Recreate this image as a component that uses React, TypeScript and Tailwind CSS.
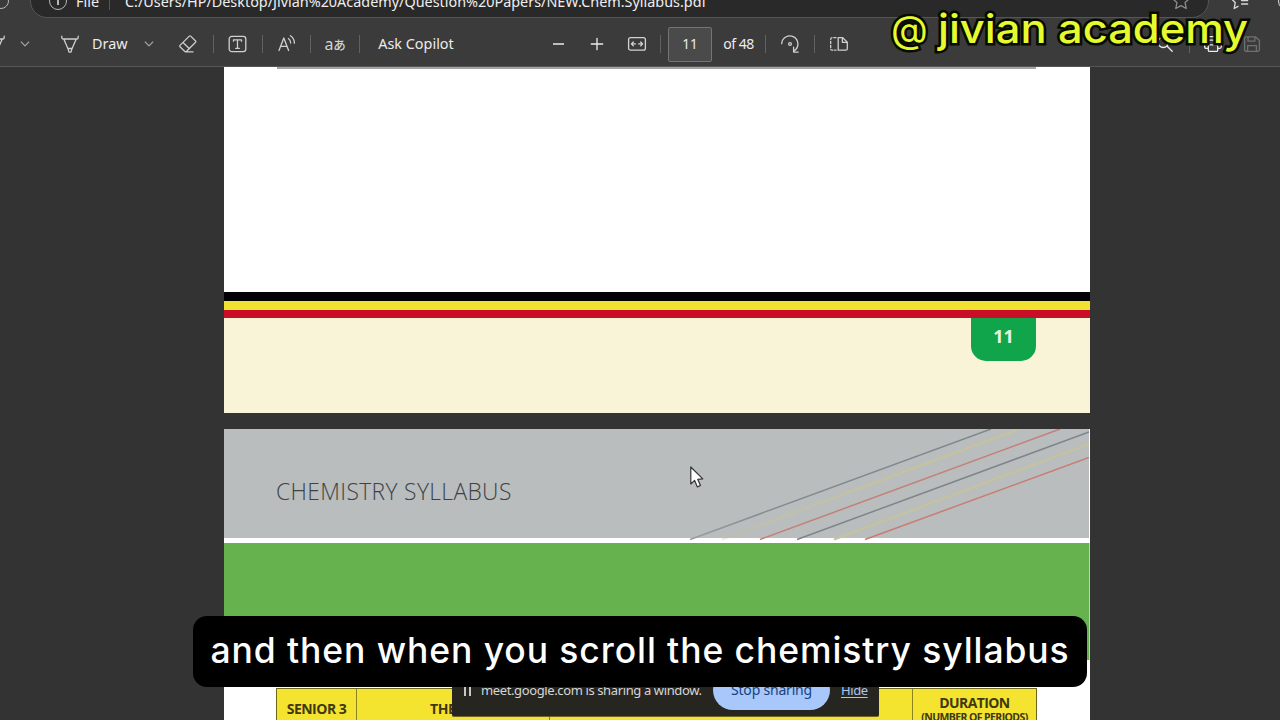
import type { ReactNode } from "react";

const svgProps = {
  fill: "none",
  stroke: "currentColor",
  strokeLinecap: "round" as const,
  strokeLinejoin: "round" as const,
};

function Cell({ className, children }: { className: string; children?: ReactNode }) {
  return <div className={`flex h-full shrink-0 items-center justify-center ${className}`}>{children}</div>;
}

function Separator() {
  return <div className="h-[18px] w-px shrink-0 bg-[#616161]" />;
}

function Chevron() {
  return (
    <svg {...svgProps} width="10" height="10" viewBox="0 0 10 10" strokeWidth="1.1" className="text-[#a5a5a5]">
      <path d="M1.2 3 L5 6.8 L8.8 3" />
    </svg>
  );
}

function PenIcon() {
  return (
    <svg {...svgProps} width="20" height="20" viewBox="0 0 20 20" strokeWidth="1.3" className="shrink-0 text-[#cfcfcf]">
      <path d="M1.8 2.2v1.2c0 .9.6 1.6 1.6 1.6h13.2c1 0 1.6-.7 1.6-1.6V2.2M3.9 5.2l4.4 10.3M16.1 5.2l-4.4 10.3M8 14.5h4l-1 3.6H9z" />
    </svg>
  );
}

function EraserIcon() {
  return (
    <svg {...svgProps} width="20" height="20" viewBox="0 0 20 20" strokeWidth="1.25">
      <path d="M2 11.4 L11.3 2.1 Q12 1.5 12.7 2.1 L17.6 7 Q18.2 7.6 17.6 8.3 L8.6 17.2 Q7.6 18 6.6 17.2 L2 12.8 Q1.4 12.1 2 11.4zM5 8.5l6.4 6.3M7.6 17.9H15" />
    </svg>
  );
}

function TextBoxIcon() {
  return (
    <svg {...svgProps} width="20" height="20" viewBox="0 0 20 20" strokeWidth="1.3">
      <rect x="1.2" y="2.4" width="16.6" height="15.2" rx="2.6" />
      <path d="M5.5 7.2V5.8h8v1.4M9.5 5.8v8.6M7.7 14.4h3.6" />
    </svg>
  );
}

function ReadAloudIcon() {
  return (
    <svg {...svgProps} width="20" height="20" viewBox="0 0 20 20" strokeWidth="1.3">
      <path d="M2 16.5 L6.8 4 L11.6 16.5M3.6 12.3h6.4M11.4 4.5c1.5 1 2.3 2.6 2.3 4.6M13.4 1.7c2.6 1.7 4 4.3 4 7.5" />
    </svg>
  );
}

function FitWidthIcon() {
  return (
    <svg {...svgProps} width="20" height="20" viewBox="0 0 20 20" strokeWidth="1.3">
      <rect x="1.6" y="3.6" width="16.8" height="12.6" rx="2" />
      <path d="M4.4 9.9h4M11.6 9.9h4M6.3 8L4.4 9.9l1.9 1.9M13.7 8l1.9 1.9-1.9 1.9" />
    </svg>
  );
}

function RotateIcon() {
  return (
    <svg {...svgProps} width="20" height="20" viewBox="0 0 20 20" strokeWidth="1.3">
      <path d="M1.7 9.7A8.1 8.1 0 1 1 14.5 16.6M13.6 13.2v4.9h4.6" />
      <circle cx="10" cy="10" r="1.4" />
    </svg>
  );
}

function PageViewIcon() {
  return (
    <svg {...svgProps} width="20" height="20" viewBox="0 0 20 20" strokeWidth="1.3">
      <path d="M9.2 3.7h4.5l4.6 4.4v6.7q0 1.4-1.4 1.4H9.2zM13.4 3.9v4.5h4.7" />
      <path d="M7 3.7H3.2q-1.5 0-1.5 1.5v9.6q0 1.4 1.5 1.4H7" strokeDasharray="2.2 1.8" />
    </svg>
  );
}

function SearchIcon() {
  return (
    <svg {...svgProps} width="18" height="18" viewBox="0 0 18 18" strokeWidth="1.3">
      <circle cx="7.3" cy="7.3" r="5.2" />
      <path d="M11.2 11.2l5 5" />
    </svg>
  );
}

function PrintIcon() {
  return (
    <svg {...svgProps} width="20" height="20" viewBox="0 0 20 20" strokeWidth="1.3">
      <path d="M5.3 6V3.6q0-1 1-1h7.4q1 0 1 1V6M5.3 14.3H3.2q-1.5 0-1.5-1.5V8.2q0-2 2-2h12.6q2 0 2 2v4.6q0 1.5-1.5 1.5h-2.1" />
      <rect x="5.3" y="10.8" width="9.4" height="6.6" rx="1.2" />
    </svg>
  );
}

function SaveIcon() {
  return (
    <svg {...svgProps} width="18" height="18" viewBox="0 0 18 18" strokeWidth="1.3" className="text-[#707070]">
      <path d="M3.2 1.8h9.2l4 3.6v9.2q0 1.7-1.6 1.7H3.2q-1.6 0-1.6-1.7V3.4q0-1.6 1.6-1.6zM5 2v4.2h6.8V2M4.6 16v-5.4h8.8V16" />
    </svg>
  );
}

function StarIcon() {
  return (
    <svg {...svgProps} width="20" height="20" viewBox="0 0 20 20" strokeWidth="1.3">
      <path d="M10 1.5l2.5 5.3 5.9.8-4.3 4 1.1 5.9L10 14.6l-5.2 2.9 1.1-5.9-4.3-4 5.9-.8z" />
    </svg>
  );
}

function FavoritesIcon() {
  return (
    <svg {...svgProps} width="20" height="20" viewBox="0 0 20 20" strokeWidth="1.4">
      <path d="M11.6 6.8L9 1.5 6.5 6.8l-5.2.8 3.9 4-1 5.9L8 15.3M11.6 9.6h6M11.6 13h6" />
    </svg>
  );
}

function AddressRow() {
  return (
    <div className="flex h-[18px] shrink-0 items-end overflow-hidden text-[#d8d8d8]">
      <div className="flex h-[34px] w-[30px] shrink-0 items-center">
        <div className="-ml-[7px] h-4 w-4 rounded-full border-[1.5px] border-[#b5b5b5]" />
      </div>
      <div className="flex h-[34px] w-[1179px] shrink-0 items-center rounded-full border border-[#565656] bg-[#292929]">
        <div className="ml-[18px] flex h-[18px] w-[18px] shrink-0 items-center justify-center rounded-full border-[1.5px] border-[#b5b5b5]">
          <div className="h-2 w-[1.5px] bg-[#b5b5b5]" />
        </div>
        <span className="ml-[9px] w-[24px] shrink-0 pt-px text-[14.4px] leading-5 text-[#efefef]">File</span>
        <div className="ml-[9px] h-[18px] w-px bg-[#555]" />
        <span className="ml-[15px] w-[590px] shrink-0 whitespace-nowrap pt-px text-[14.4px] leading-5 text-[#efefef]">
          C:/Users/HP/Desktop/Jivian%20Academy/Question%20Papers/NEW.Chem.Syllabus.pdf
        </span>
        <div className="ml-auto mr-[17px] text-[#8c8c8c]">
          <StarIcon />
        </div>
      </div>
      <div className="flex h-[34px] grow items-center pl-[21px]">
        <FavoritesIcon />
        <div className="ml-[28px] h-5 w-5 shrink-0 rounded-full border-[1.5px] border-[#dedede]" />
      </div>
    </div>
  );
}

function Toolbar() {
  return (
    <div className="flex h-[49px] shrink-0 items-center border-b border-[#565656] pt-[4px] text-[14.4px] text-[#ececec]">
      <Cell className="w-[12px] justify-end overflow-hidden pr-[6px]">
        <PenIcon />
      </Cell>
      <Cell className="w-[26px]"><Chevron /></Cell>
      <Cell className="w-[91px] pl-[22px]">
        <PenIcon />
        <span className="ml-[12px] mr-auto">Draw</span>
      </Cell>
      <Cell className="w-[10px]" />
      <Cell className="w-[20px]"><Chevron /></Cell>
      <Cell className="w-[54px] pl-[4px] text-[#cfcfcf]"><EraserIcon /></Cell>
      <Separator />
      <Cell className="w-[48px] text-[#cfcfcf]"><TextBoxIcon /></Cell>
      <Separator />
      <Cell className="w-[47px] text-[#cfcfcf]"><ReadAloudIcon /></Cell>
      <Separator />
      <Cell className="w-[48px] text-[#d2d2d2]">
        <span className="font-['Noto_Sans','Noto_Sans_CJK_JP',sans-serif] text-[16px] tracking-[-0.2px]">
          a<span className="text-[12.5px] font-medium">あ</span>
        </span>
      </Cell>
      <Separator />
      <Cell className="w-[112px]"><span className="whitespace-nowrap">Ask Copilot</span></Cell>
      <Cell className="ml-[67px] w-[38px]"><div className="h-[1.5px] w-[11px] bg-[#bdbdbd]" /></Cell>
      <Cell className="w-[38px] pl-[2px]">
        <svg {...svgProps} width="14" height="14" viewBox="0 0 14 14" strokeWidth="1.3"><path d="M1.3 7h11.4M7 1.3v11.4" /></svg>
      </Cell>
      <Cell className="w-[44px] text-[#d2d2d2]"><FitWidthIcon /></Cell>
      <Cell className="w-px" />
      <Separator />
      <div className="ml-[7px] flex h-[35px] w-[44px] shrink-0 items-center justify-center rounded-[2px] border border-[#747474] bg-[#4a4a4a] pt-px text-[13.5px]">11</div>
      <Cell className="w-[53px] pb-px text-[14px] tracking-[-0.5px]">of 48</Cell>
      <Separator />
      <Cell className="w-[48px] text-[#cfcfcf]"><RotateIcon /></Cell>
      <Separator />
      <Cell className="w-[47px] text-[#cfcfcf]"><PageViewIcon /></Cell>
      <Cell className="ml-auto w-[49px]"><SearchIcon /></Cell>
      <Separator />
      <Cell className="w-[46px]"><PrintIcon /></Cell>
      <Cell className="w-[32px]"><SaveIcon /></Cell>
      <Cell className="w-[12px]" />
    </div>
  );
}

function HeaderLines() {
  return (
    <svg className="block shrink-0" width="405" height="112" viewBox="0 0 405 112" fill="none" strokeWidth="1.5">
      <defs>
        <linearGradient id="fade" x1="0" x2="405" y1="0" y2="0" gradientUnits="userSpaceOnUse">
          <stop offset="0" stopColor="#9b9ea1" />
          <stop offset="0.2" stopColor="#858c8f" />
          <stop offset="1" stopColor="#7d858b" />
        </linearGradient>
        <linearGradient id="gold" x1="38" x2="200" y1="0" y2="0" gradientUnits="userSpaceOnUse">
          <stop offset="0" stopColor="#c5c29f" stopOpacity="0.3" />
          <stop offset="1" stopColor="#c5c29f" />
        </linearGradient>
      </defs>
      <path d="M6 110.5L307 0" stroke="url(#fade)" />
      <path d="M38 110.5L335 0" stroke="url(#gold)" strokeWidth="2.4" />
      <path d="M76 110.5L376 0" stroke="#c47f78" />
      <path d="M113 110.5L405 3" stroke="#7d858b" />
      <path d="M150 110.5L405 15" stroke="#c5c29f" strokeWidth="2.4" />
      <path d="M181 110.5L405 28.5" stroke="#c97c74" />
    </svg>
  );
}

function FirstPage() {
  return (
    <section className="flex h-[346px] w-[866px] shrink-0 flex-col bg-white">
      <div className="mx-[53px] h-[2px] w-[759px] bg-[#a3a3a3]" />
      <div className="h-[223px]" />
      <div className="h-[9px] bg-[#020106]" />
      <div className="h-[9px] bg-[#f1e131]" />
      <div className="h-[8px] bg-[#c90e28]" />
      <div className="flex grow justify-end bg-[#f9f3d7] pr-[54px]">
        <div className="flex h-[43px] w-[65px] justify-center rounded-b-[15px] bg-[#10a54b] pt-[6px] font-['Open_Sans',sans-serif] text-[18px] font-bold leading-[25px] text-[#e4f6e3]">11</div>
      </div>
    </section>
  );
}

function SecondPage() {
  return (
    <section className="flex h-[291px] w-[866px] shrink-0 flex-col bg-white">
      <div className="flex h-[109px] w-[865px] justify-between bg-[#b9bdbe]">
        <h1 className="ml-[52px] mt-[45px] whitespace-nowrap font-['Open_Sans',sans-serif] text-[24.5px] font-light leading-[34px] tracking-[0.4px] text-[#3d4244]">
          <span className="inline-block origin-left scale-x-[0.93]">CHEMISTRY SYLLABUS</span>
        </h1>
        <HeaderLines />
      </div>
      <div className="mt-[5px] flex h-[117px] shrink-0">
        <div className="w-[865px] bg-[#65b24f]" />
        <div className="w-px bg-[#c3cdbd]" />
      </div>
      <div className="ml-[52px] mt-[28px] flex h-[33px] w-[761px] shrink-0 border-x border-t border-[#6c661f] bg-[#f4e32f] font-['Open_Sans',sans-serif] text-[14px] font-bold text-[#40380f]">
        <div className="flex w-[80px] shrink-0 items-start justify-center border-r border-[#8c831f] pt-[10px] leading-5 tracking-[-0.5px]">SENIOR 3</div>
        <div className="flex w-[193px] shrink-0 items-start justify-center border-r border-[#8c831f] pt-[10px] leading-5 tracking-[-0.3px]">THEME</div>
        <div className="w-[363px] shrink-0 border-r border-[#8c831f]" />
        <div className="flex grow flex-col items-center pt-[4px]">
          <div className="leading-5 tracking-[-0.6px]">DURATION</div>
          <div className="-mt-[3px] whitespace-nowrap text-[10.5px] leading-[15px] tracking-[-0.6px]">(NUMBER OF PERIODS)</div>
        </div>
      </div>
    </section>
  );
}

function SharingBar() {
  return (
    <div className="absolute left-[452px] top-[664px] flex h-[53px] w-[427px] items-center rounded-b-[2px] border-b border-[#6b6722] bg-[#262520] text-[13px] text-[#d6d6d6]">
      <div className="ml-[12px] flex gap-[3px]">
        <div className="h-[11px] w-[2px] bg-[#c7c7c7]" />
        <div className="h-[11px] w-[2px] bg-[#c7c7c7]" />
      </div>
      <span className="ml-[10px] w-[232px] shrink-0 whitespace-nowrap pt-px tracking-[-0.38px]">meet.google.com is sharing a window.</span>
      <div className="flex h-[40px] w-[117px] shrink-0 items-center justify-center rounded-full bg-[#a8c7fa] pb-px text-[14px] tracking-[-0.2px] text-[#17427e]">Stop sharing</div>
      <span className="ml-[11px] pt-px tracking-[-0.4px] text-[#a9c5f5] underline underline-offset-2">Hide</span>
    </div>
  );
}

export default function App() {
  return (
    <div className="relative flex h-[720px] w-[1280px] flex-col overflow-hidden bg-[#333333] font-['Noto_Sans','Open_Sans',sans-serif]">
      <header className="flex h-[67px] shrink-0 flex-col bg-[#3b3b3b]">
        <AddressRow />
        <Toolbar />
      </header>
      <main className="flex grow flex-col gap-4 pl-[224px]">
        <FirstPage />
        <SecondPage />
      </main>

      <SharingBar />

      <svg className="absolute left-[689px] top-[465px]" width="16" height="24" viewBox="0 0 16 24">
        <path d="M1.8 2v17l3.8-3.6 2.8 6.5 3.1-1.4-2.7-6.1 5-.5z" fill="white" stroke="#333" strokeWidth="1.2" strokeLinejoin="round" />
      </svg>

      <div className="absolute left-[891px] top-[4px] flex whitespace-nowrap font-['Inter',sans-serif] leading-[50px] text-[#e6fb2f] [-webkit-text-stroke:5px_#080b00] [paint-order:stroke_fill]">
        <span className="text-[38px]">@&nbsp;</span>
        <span className="origin-left scale-x-[1.085] text-[40px] font-medium">jivian academy</span>
      </div>

      <div className="absolute left-[193px] top-[616px] flex h-[71px] w-[894px] items-center justify-center rounded-[14px] bg-black pb-[2px]">
        <span className="whitespace-nowrap font-['Inter',sans-serif] text-[35.5px] font-medium leading-[50px] tracking-[0.91px] text-white">
          and then when you scroll the chemistry syllabus
        </span>
      </div>
    </div>
  );
}
